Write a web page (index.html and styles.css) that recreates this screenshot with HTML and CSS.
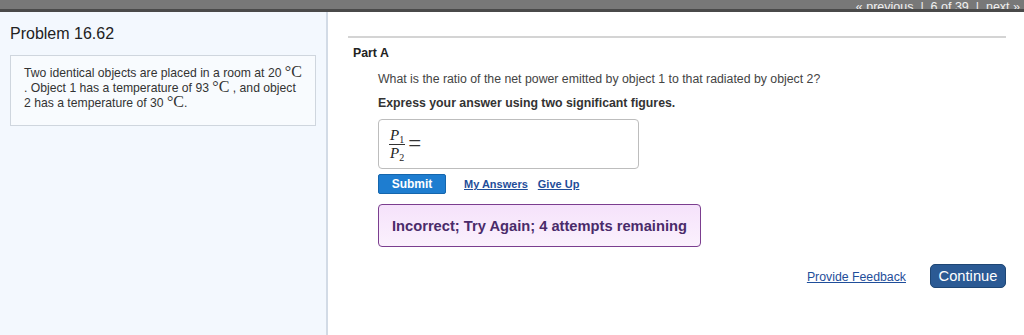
FILE: index.html
```html
<!DOCTYPE html>
<html>
<head>
<meta charset="utf-8">
<link rel="stylesheet" href="styles.css">
</head>
<body>
<div class="topbar">
  <div class="pager">« previous&nbsp;&nbsp;|&nbsp;&nbsp;6 of 39&nbsp;&nbsp;|&nbsp;&nbsp;next »</div>
</div>
<div class="main">
  <div class="left">
    <div class="ptitle">Problem 16.62</div>
    <div class="pbox">Two identical objects are placed in a room at 20 <span class="m">°C</span><br>. Object 1 has a temperature of 93 <span class="m">°C</span> , and object<br>2 has a temperature of 30 <span class="m">°C</span>.</div>
  </div>
  <div class="right">
    <div class="rule"></div>
    <div class="part">Part A</div>
    <div class="body">
      <div class="q">What is the ratio of the net power emitted by object 1 to that radiated by object 2?</div>
      <div class="instr">Express your answer using two significant figures.</div>
      <div class="answer">
        <span class="frac"><span class="num"><i>P</i><sub>1</sub></span><span class="den"><i>P</i><sub>2</sub></span></span><span class="eq">=</span>
      </div>
      <div class="actions">
        <span class="submit">Submit</span>
        <a class="lnk" href="#">My Answers</a>
        <a class="lnk" href="#">Give Up</a>
      </div>
      <div class="feedback">Incorrect; Try Again; 4 attempts remaining</div>
    </div>
    <div class="footer">
      <a class="pf" href="#">Provide Feedback</a>
      <span class="cont">Continue</span>
    </div>
  </div>
</div>
</body>
</html>
```
FILE: styles.css
```css
html, body {
  margin: 0;
  padding: 0;
  height: 100%;
  background: #fff;
  font-family: "Liberation Sans", Arial, sans-serif;
}
.topbar {
  height: 9px;
  background: #787878;
  border-bottom: 3px solid #4a4a4a;
  overflow: hidden;
  display: flex;
  justify-content: flex-end;
  align-items: flex-end;
  padding-right: 4px;
}
.pager {
  color: #f0f0f0;
  font-size: 12.5px;
  line-height: 12px;
  margin-bottom: -4px;
}
.main {
  display: flex;
  height: calc(100% - 12px);
}
.left {
  width: 328px;
  flex: none;
  background: #f3f8fe;
  border-right: 2px solid #d2dbe6;
  box-sizing: border-box;
  padding: 13px 10px 0 10px;
}
.ptitle {
  font-size: 16px;
  color: #222;
  line-height: 18px;
}
.pbox {
  margin-top: 12px;
  border: 1px solid #cfd6de;
  background: #f8fbfe;
  padding: 10px 10px 14px 13px;
  font-size: 12.2px;
  line-height: 15px;
  color: #333;
}
.m {
  font-family: "Liberation Serif", "Times New Roman", serif;
  font-size: 16px;
  line-height: 0;
}
.right {
  flex: 1;
  padding: 24px 18px 0 20px;
  display: flex;
  flex-direction: column;
}
.rule {
  height: 2px;
  background: #d4d4d4;
}
.part {
  font-weight: bold;
  font-size: 12.3px;
  color: #222;
  margin-top: 8px;
  margin-left: 5px;
}
.body {
  margin-left: 30px;
}
.q {
  margin-top: 12px;
  font-size: 12.3px;
  color: #444;
}
.instr {
  margin-top: 10px;
  font-weight: bold;
  font-size: 12.3px;
  color: #333;
}
.answer {
  margin-top: 9px;
  width: 249px;
  height: 48px;
  border: 1px solid #bdbdbd;
  border-radius: 4px;
  display: flex;
  align-items: center;
  padding-left: 10px;
  font-family: "Liberation Serif", "Times New Roman", serif;
  color: #222;
}
.frac {
  display: inline-flex;
  flex-direction: column;
  align-items: center;
  font-size: 15px;
  line-height: 15px;
}
.frac sub {
  font-size: 10px;
  vertical-align: -3px;
  line-height: 0;
}
.num {
  border-bottom: 1px solid #333;
  padding: 0 1px 1px;
}
.den {
  padding-top: 1px;
}
.eq {
  font-size: 23px;
  margin-left: 3px;
  color: #333;
}
.actions {
  margin-top: 5px;
  display: flex;
  align-items: center;
}
.submit {
  background: #1e7dd0;
  border: 1px solid #1566ad;
  border-radius: 2px;
  color: #fff;
  font-weight: bold;
  font-size: 12px;
  width: 66px;
  height: 18px;
  line-height: 18px;
  text-align: center;
  margin-right: 18px;
}
.lnk {
  color: #1f4e9a;
  font-weight: bold;
  font-size: 11px;
  text-decoration: underline;
  margin-right: 10px;
}
.feedback {
  margin-top: 10px;
  width: 323px;
  height: 43px;
  box-sizing: border-box;
  border: 1px solid #7b3e8f;
  border-radius: 4px;
  background: linear-gradient(#f5e2fb, #fbf1fd);
  color: #4a2b6a;
  font-weight: bold;
  font-size: 14.7px;
  display: flex;
  align-items: center;
  padding-left: 13px;
}
.footer {
  margin-top: 17px;
  display: flex;
  justify-content: flex-end;
  align-items: center;
}
.pf {
  color: #1f4e9a;
  font-size: 12.3px;
  text-decoration: underline;
  margin-right: 24px;
  margin-top: 2px;
}
.cont {
  background: #2b5a94;
  border: 1px solid #1e4674;
  border-radius: 5px;
  color: #fff;
  font-size: 14.7px;
  width: 74px;
  height: 22px;
  line-height: 22px;
  text-align: center;
}
```
